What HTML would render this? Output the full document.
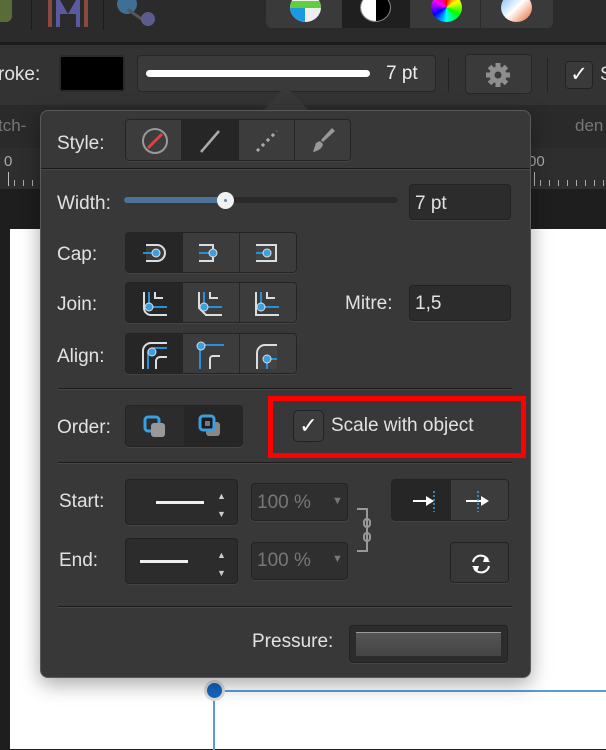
<!DOCTYPE html>
<html><head><meta charset="utf-8"><style>
*{box-sizing:border-box;margin:0;padding:0}
body{width:606px;height:744px;overflow:hidden;background:#1e1e1e;font-family:"Liberation Sans",sans-serif;position:relative;color:#e6e6e6}
.a{position:absolute}
.lbl{position:absolute;font-size:19px;color:#e2e2e2;line-height:20px}
.seg{position:absolute;background:#2c2c2c;border:1px solid #242424;border-radius:4px;display:flex;overflow:hidden;box-shadow:0 1px 0 #444}
.seg>div{flex:1;border-left:1px solid #262626;background:#3c3c3c;position:relative}
.seg>div:first-child{border-left:none}
.seg>div.on{background:#262626}
.box{position:absolute;background:#2c2c2c;border:1px solid #222;border-radius:4px;box-shadow:0 1px 0 #444}
.sep{position:absolute;left:17px;right:18px;height:2px;background:#1a1a1a;border-bottom:1px solid #474747}
</style></head><body>
<!-- top bar -->
<div class="a" style="left:0;top:0;width:606px;height:42px;background:#2b2b2b"></div>
<div class="a" style="left:0;top:42px;width:606px;height:3px;background:#1c1c1c"></div>
<div class="a" style="left:0;top:0;width:12px;height:22px;background:#5a6b3a;border-radius:0 0 6px 0"></div>
<div class="a" style="left:31px;top:0;width:1px;height:30px;background:#1c1c1c"></div>
<div class="a" style="left:48px;top:0;width:40px;height:27px">
 <div class="a" style="left:0;top:0;width:4px;height:27px;background:#8a4a40"></div>
 <div class="a" style="left:36px;top:0;width:4px;height:27px;background:#8a4a40"></div>
 <div class="a" style="left:8px;top:0;width:4px;height:27px;background:#5a5aa0"></div>
 <div class="a" style="left:28px;top:0;width:4px;height:27px;background:#5a5aa0"></div>
 <div class="a" style="left:12px;top:0;width:16px;height:14px;background:#5a5aa0;clip-path:polygon(0 0,50% 100%,100% 0,100% 100%,0 100%)"></div>
</div>
<div class="a" style="left:103px;top:0;width:1px;height:30px;background:#1c1c1c"></div>
<div class="a" style="left:117px;top:-6px;width:20px;height:20px;border-radius:50%;background:#3f6f95"></div>
<div class="a" style="left:128px;top:8px;width:18px;height:3px;background:#555;transform:rotate(35deg);transform-origin:left"></div>
<div class="a" style="left:141px;top:12px;width:14px;height:14px;border-radius:50%;background:#5c5c8c"></div>
<div class="a" style="left:266px;top:0;width:287px;height:28px;background:#3a3a3a;border-radius:0 0 6px 6px"></div>
<div class="a" style="left:342px;top:0;width:68px;height:28px;background:#1f1f1f"></div>
<div class="a" style="left:480px;top:0;width:1px;height:28px;background:#2a2a2a"></div>
<div class="a" style="left:290px;top:-7px;width:31px;height:29px;border-radius:50%;overflow:hidden;background:#eee">
 <div class="a" style="left:0;top:8px;width:31px;height:7px;background:#5fd03a"></div>
 <div class="a" style="left:0;top:15px;width:15px;height:14px;background:#1a9ae0"></div>
</div>
<div class="a" style="left:360px;top:-7px;width:31px;height:29px;border-radius:50%;overflow:hidden;background:#000;border:1px solid #888"><div class="a" style="left:0;top:0;width:15px;height:29px;background:#fff"></div></div>
<div class="a" style="left:431px;top:-7px;width:31px;height:29px;border-radius:50%;background:conic-gradient(red,yellow,lime,cyan,blue,magenta,red)"></div>
<div class="a" style="left:501px;top:-7px;width:31px;height:29px;border-radius:50%;background:linear-gradient(135deg,#6ab4ff,#fff 50%,#e8652a)"></div>
<!-- toolbar -->
<div class="a" style="left:0;top:45px;width:606px;height:60px;background:#333"></div>
<div class="lbl" style="left:-2px;top:65px">roke:</div>
<div class="a" style="left:59px;top:55px;width:66px;height:37px;background:#000;border:2px solid #2a2a2a;border-radius:3px"></div>
<div class="a" style="left:137px;top:55px;width:299px;height:37px;background:#3a3a3a;border:1px solid #262626;border-radius:4px"></div>
<div class="a" style="left:146px;top:70px;width:224px;height:7px;background:#fff;border-radius:4px"></div>
<div class="lbl" style="left:386px;top:64px;color:#eee">7 pt</div>
<div class="a" style="left:448px;top:58px;width:1px;height:34px;background:#222"></div>
<div class="a" style="left:465px;top:54px;width:67px;height:40px;background:#3a3a3a;border:1px solid #262626;border-radius:4px">
 <svg class="a" style="left:19px;top:7px" width="26" height="26" viewBox="0 0 26 26"><g fill="#8e8e8e"><circle cx="13" cy="13" r="8.5"/><g id="t"><rect x="10.5" y="1" width="5" height="6"/><rect x="10.5" y="19" width="5" height="6"/></g><use href="#t" transform="rotate(45 13 13)"/><use href="#t" transform="rotate(90 13 13)"/><use href="#t" transform="rotate(135 13 13)"/></g><circle cx="13" cy="13" r="3.5" fill="#3a3a3a"/></svg>
</div>
<div class="a" style="left:547px;top:58px;width:1px;height:34px;background:#222"></div>
<div class="a" style="left:565px;top:61px;width:28px;height:28px;background:#3a3a3a;border:1px solid #222;border-radius:4px;color:#fff;font-size:21px;text-align:center;line-height:26px">✓</div>
<div class="lbl" style="left:600px;top:65px">S</div>
<!-- ruler area -->
<div class="a" style="left:0;top:105px;width:606px;height:43px;background:#2a2a2a"></div>
<div class="a" style="left:0;top:148px;width:606px;height:41px;background:#2e2e2e"></div>
<div class="lbl" style="left:-2px;top:116px;color:#777;font-size:17px">tch-</div>
<div class="lbl" style="left:575px;top:116px;color:#777;font-size:17px">den</div>
<div class="lbl" style="left:4px;top:152px;color:#aaa;font-size:15px">0</div>
<div class="lbl" style="left:528px;top:152px;color:#aaa;font-size:15px">00</div>
<div class="a" style="left:8px;top:172px;width:1px;height:14px;background:#bbb"></div>
<div class="a" style="left:534px;top:172px;width:1px;height:14px;background:#bbb"></div>
<div class="a" style="left:540px;top:180px;width:70px;height:6px;background:repeating-linear-gradient(90deg,#aaa 0 1px,transparent 1px 9px)"></div>
<div class="a" style="left:14px;top:180px;width:30px;height:6px;background:repeating-linear-gradient(90deg,#aaa 0 1px,transparent 1px 9px)"></div>
<!-- canvas -->
<div class="a" style="left:10px;top:229px;width:600px;height:520px;background:#fff"></div>
<div class="a" style="left:214px;top:690px;width:400px;height:2px;background:#5b9bd8"></div>
<div class="a" style="left:213px;top:690px;width:2px;height:60px;background:#5b9bd8"></div>
<div class="a" style="left:204px;top:680px;width:21px;height:21px;border-radius:50%;background:#1565c0;border:3px solid #ddd"></div>
<!-- popup -->
<div class="a" style="left:258px;top:86px;width:56px;height:30px;background:#383838;clip-path:polygon(50% 0,100% 100%,0 100%)"></div>
<div class="a" style="left:40px;top:110px;width:491px;height:568px;background:#383838;border:1px solid #5a5a5a;border-radius:8px;box-shadow:0 6px 20px rgba(0,0,0,.35)">
 <div class="lbl" style="left:16px;top:23px">Style:</div>
 <div class="seg" style="left:84px;top:8px;width:226px;height:42px">
  <div><svg class="a" style="left:15px;top:7px" width="28" height="28"><circle cx="14" cy="14" r="12" fill="none" stroke="#999" stroke-width="2"/><line x1="7" y1="21" x2="21" y2="7" stroke="#e04040" stroke-width="3"/></svg></div>
  <div class="on"><svg class="a" style="left:14px;top:7px" width="28" height="28"><line x1="5" y1="25" x2="23" y2="4" stroke="#aaa" stroke-width="2.5"/></svg></div>
  <div><svg class="a" style="left:14px;top:7px" width="28" height="28"><line x1="4" y1="24" x2="24" y2="4" stroke="#aaa" stroke-width="3" stroke-dasharray="3 4"/></svg></div>
  <div><svg class="a" style="left:14px;top:6px" width="28" height="28"><path d="M23 2 L26 5 L14 16 L12 14Z M11 15 L14 18 Q13 24 4 26 Q6 20 7 17Z" fill="#999"/></svg></div>
 </div>
 <div class="sep" style="top:57px;left:0;right:0"></div>
 <div class="lbl" style="left:16px;top:83px">Width:</div>
 <div class="a" style="left:83px;top:86px;width:274px;height:6px;border-radius:3px;background:#2a2a2a"></div>
 <div class="a" style="left:83px;top:86px;width:104px;height:6px;border-radius:3px;background:#4d7399"></div>
 <div class="a" style="left:176px;top:81px;width:17px;height:17px;border-radius:50%;background:#f2f2f2"><div class="a" style="left:7px;top:7px;width:3px;height:3px;border-radius:50%;background:#6a8aaa"></div></div>
 <div class="box" style="left:368px;top:73px;width:102px;height:36px"></div>
 <div class="lbl" style="left:374px;top:83px">7 pt</div>

 <div class="lbl" style="left:16px;top:134px">Cap:</div>
 <div class="seg" style="left:84px;top:121px;width:172px;height:41px">
  <div class="on"><svg class="a" style="left:17px;top:9px" width="26" height="22"><path d="M3 3H14A8 8 0 0 1 14 19H3" fill="#3a3a3a" stroke="#ddd" stroke-width="2"/><line x1="0" y1="11" x2="13" y2="11" stroke="#2a8fd6" stroke-width="2"/><circle cx="13" cy="11" r="4" fill="#3ba0e0" stroke="#ddd" stroke-width="1"/></svg></div>
  <div><svg class="a" style="left:13px;top:9px" width="30" height="22"><path d="M3 3H17V19H3" fill="#444" stroke="#ddd" stroke-width="2"/><line x1="3" y1="11" x2="17" y2="11" stroke="#2a8fd6" stroke-width="2"/><circle cx="17" cy="11" r="4" fill="#3ba0e0" stroke="#ddd" stroke-width="1"/></svg></div>
  <div><svg class="a" style="left:13px;top:9px" width="30" height="22"><path d="M3 3H23V19H3" fill="#444" stroke="#ddd" stroke-width="2"/><line x1="3" y1="11" x2="14" y2="11" stroke="#2a8fd6" stroke-width="2"/><circle cx="14" cy="11" r="4" fill="#3ba0e0" stroke="#ddd" stroke-width="1"/></svg></div>
 </div>
 <div class="lbl" style="left:16px;top:184px">Join:</div>
 <div class="seg" style="left:84px;top:171px;width:172px;height:41px">
  <div class="on"><svg class="a" style="left:15px;top:7px" width="28" height="28"><path d="M3 2V18A7 7 0 0 0 10 25H26" fill="none" stroke="#ddd" stroke-width="2"/><path d="M14 2V8H22" fill="none" stroke="#ddd" stroke-width="2"/><path d="M8 2V17H26" fill="none" stroke="#2a8fd6" stroke-width="2"/><circle cx="8" cy="17" r="4" fill="#3ba0e0" stroke="#ddd"/></svg></div>
  <div><svg class="a" style="left:13px;top:7px" width="28" height="28"><path d="M3 2V18L10 25H26" fill="none" stroke="#ddd" stroke-width="2"/><path d="M14 2V8H22" fill="none" stroke="#ddd" stroke-width="2"/><path d="M8 2V17H26" fill="none" stroke="#2a8fd6" stroke-width="2"/><circle cx="8" cy="17" r="4" fill="#3ba0e0" stroke="#ddd"/></svg></div>
  <div><svg class="a" style="left:13px;top:7px" width="28" height="28"><path d="M3 2V25H26" fill="none" stroke="#ddd" stroke-width="2"/><path d="M14 2V8H22" fill="none" stroke="#ddd" stroke-width="2"/><path d="M8 2V17H26" fill="none" stroke="#2a8fd6" stroke-width="2"/><circle cx="8" cy="17" r="4" fill="#3ba0e0" stroke="#ddd"/></svg></div>
 </div>
 <div class="lbl" style="left:304px;top:183px">Mitre:</div>
 <div class="box" style="left:368px;top:174px;width:102px;height:36px"></div>
 <div class="lbl" style="left:374px;top:183px">1,5</div>
 <div class="lbl" style="left:16px;top:236px">Align:</div>
 <div class="seg" style="left:84px;top:222px;width:172px;height:41px">
  <div class="on"><svg class="a" style="left:15px;top:7px" width="28" height="28"><path d="M2 28V10A8 8 0 0 1 10 2H26" fill="none" stroke="#ddd" stroke-width="2"/><path d="M7 28V12A5 5 0 0 1 12 7H26" fill="none" stroke="#2a8fd6" stroke-width="2"/><path d="M15 28V20A4 4 0 0 1 19 16H26" fill="none" stroke="#ddd" stroke-width="2"/><circle cx="11" cy="11" r="4" fill="#3ba0e0" stroke="#ddd"/></svg></div>
  <div><svg class="a" style="left:13px;top:5px" width="30" height="30"><path d="M4 30V6H28" fill="none" stroke="#2a8fd6" stroke-width="2"/><path d="M14 30V20A3 3 0 0 1 17 17H24" fill="none" stroke="#ddd" stroke-width="2"/><circle cx="5" cy="7" r="4" fill="#3ba0e0" stroke="#ddd"/></svg></div>
  <div><svg class="a" style="left:13px;top:7px" width="30" height="28"><path d="M4 28V12A8 8 0 0 1 12 4H24V28Z" fill="#444"/><path d="M4 28V12A8 8 0 0 1 12 4H24" fill="none" stroke="#ddd" stroke-width="2"/><path d="M14 28V18H24" fill="none" stroke="#2a8fd6" stroke-width="2"/><circle cx="14" cy="18" r="4" fill="#3ba0e0" stroke="#ddd"/></svg></div>
 </div>
 <div class="sep" style="top:277px"></div>
 <div class="lbl" style="left:16px;top:307px">Order:</div>
 <div class="seg" style="left:84px;top:294px;width:118px;height:42px">
  <div style="background:#2c2c2c"><svg class="a" style="left:17px;top:9px" width="26" height="26"><rect x="2" y="2" width="14" height="14" rx="3" fill="none" stroke="#3a9ee0" stroke-width="3"/><rect x="8" y="8" width="14" height="14" rx="3" fill="#999"/></svg></div>
  <div class="on"><svg class="a" style="left:13px;top:8px" width="26" height="26"><rect x="8" y="8" width="14" height="14" rx="3" fill="#888"/><rect x="2" y="2" width="14" height="14" rx="3" fill="#1c1c1c" stroke="#3a9ee0" stroke-width="3"/><rect x="7" y="7" width="5" height="5" fill="#777"/></svg></div>
 </div>
 <div class="a" style="left:227px;top:285px;width:258px;height:62px;border:5px solid #f00"></div>
 <div class="a" style="left:252px;top:299px;width:31px;height:32px;background:#3c3c3c;border:1px solid #222;border-radius:5px;color:#fff;font-size:22px;text-align:center;line-height:30px">✓</div>
 <div class="lbl" style="left:290px;top:305px">Scale with object</div>
 <div class="sep" style="top:351px"></div>
 <div class="lbl" style="left:18px;top:381px">Start:</div>
 <div class="box" style="left:84px;top:368px;width:113px;height:46px"><div class="a" style="left:30px;top:21px;width:48px;height:3px;background:#f0f0f0"></div><div class="a" style="left:91px;top:12px;color:#ccc;font-size:9px;line-height:9px">▲<br><br>▼</div></div>
 <div class="box" style="left:210px;top:372px;width:97px;height:38px;background:#2f2f2f"></div>
 <div class="lbl" style="left:216px;top:382px;color:#777">100 %</div>
 <div class="a" style="left:291px;top:384px;color:#777;font-size:11px">▼</div>
 <div class="lbl" style="left:18px;top:440px">End:</div>
 <div class="box" style="left:84px;top:427px;width:113px;height:46px"><div class="a" style="left:14px;top:21px;width:48px;height:3px;background:#f0f0f0"></div><div class="a" style="left:91px;top:12px;color:#ccc;font-size:9px;line-height:9px">▲<br><br>▼</div></div>
 <div class="box" style="left:210px;top:431px;width:97px;height:38px;background:#2f2f2f"></div>
 <div class="lbl" style="left:216px;top:440px;color:#777">100 %</div>
 <div class="a" style="left:291px;top:442px;color:#777;font-size:11px">▼</div>
 <svg class="a" style="left:314px;top:396px" width="20" height="46"><path d="M2 2H12V44H2" fill="none" stroke="#999" stroke-width="2"/><rect x="9" y="12" width="6" height="8" rx="3" fill="none" stroke="#999" stroke-width="2"/><rect x="9" y="26" width="6" height="8" rx="3" fill="none" stroke="#999" stroke-width="2"/></svg>
 <div class="seg" style="left:350px;top:368px;width:118px;height:42px">
  <div class="on"><svg class="a" style="left:18px;top:10px" width="30" height="22"><line x1="3" y1="11" x2="17" y2="11" stroke="#fff" stroke-width="2"/><path d="M16 6L24 11L16 16Z" fill="#fff"/><line x1="24" y1="1" x2="24" y2="22" stroke="#3ba0e0" stroke-width="1.5" stroke-dasharray="2 2"/></svg></div>
  <div><svg class="a" style="left:12px;top:10px" width="32" height="22"><line x1="3" y1="11" x2="20" y2="11" stroke="#fff" stroke-width="2"/><path d="M18 6L26 11L18 16Z" fill="#fff"/><line x1="15" y1="1" x2="15" y2="22" stroke="#3ba0e0" stroke-width="1.5" stroke-dasharray="2 2"/></svg></div>
 </div>
 <div class="box" style="left:409px;top:431px;width:59px;height:41px;background:#383838"><svg class="a" style="left:19px;top:10px" width="22" height="22"><path d="M3 9A8 8 0 0 1 18 7" fill="none" stroke="#fff" stroke-width="2"/><path d="M19 13A8 8 0 0 1 4 15" fill="none" stroke="#fff" stroke-width="2"/><path d="M15 3L20 9L13 9Z M7 19L2 13L9 13Z" fill="#fff"/></svg></div>
 <div class="sep" style="top:495px"></div>
 <div class="lbl" style="left:211px;top:521px">Pressure:</div>
 <div class="box" style="left:308px;top:514px;width:159px;height:38px;padding:6px"><div style="height:24px;background:linear-gradient(#555,#444);border-top:1px solid #999"></div></div>
</div>
</body></html>
